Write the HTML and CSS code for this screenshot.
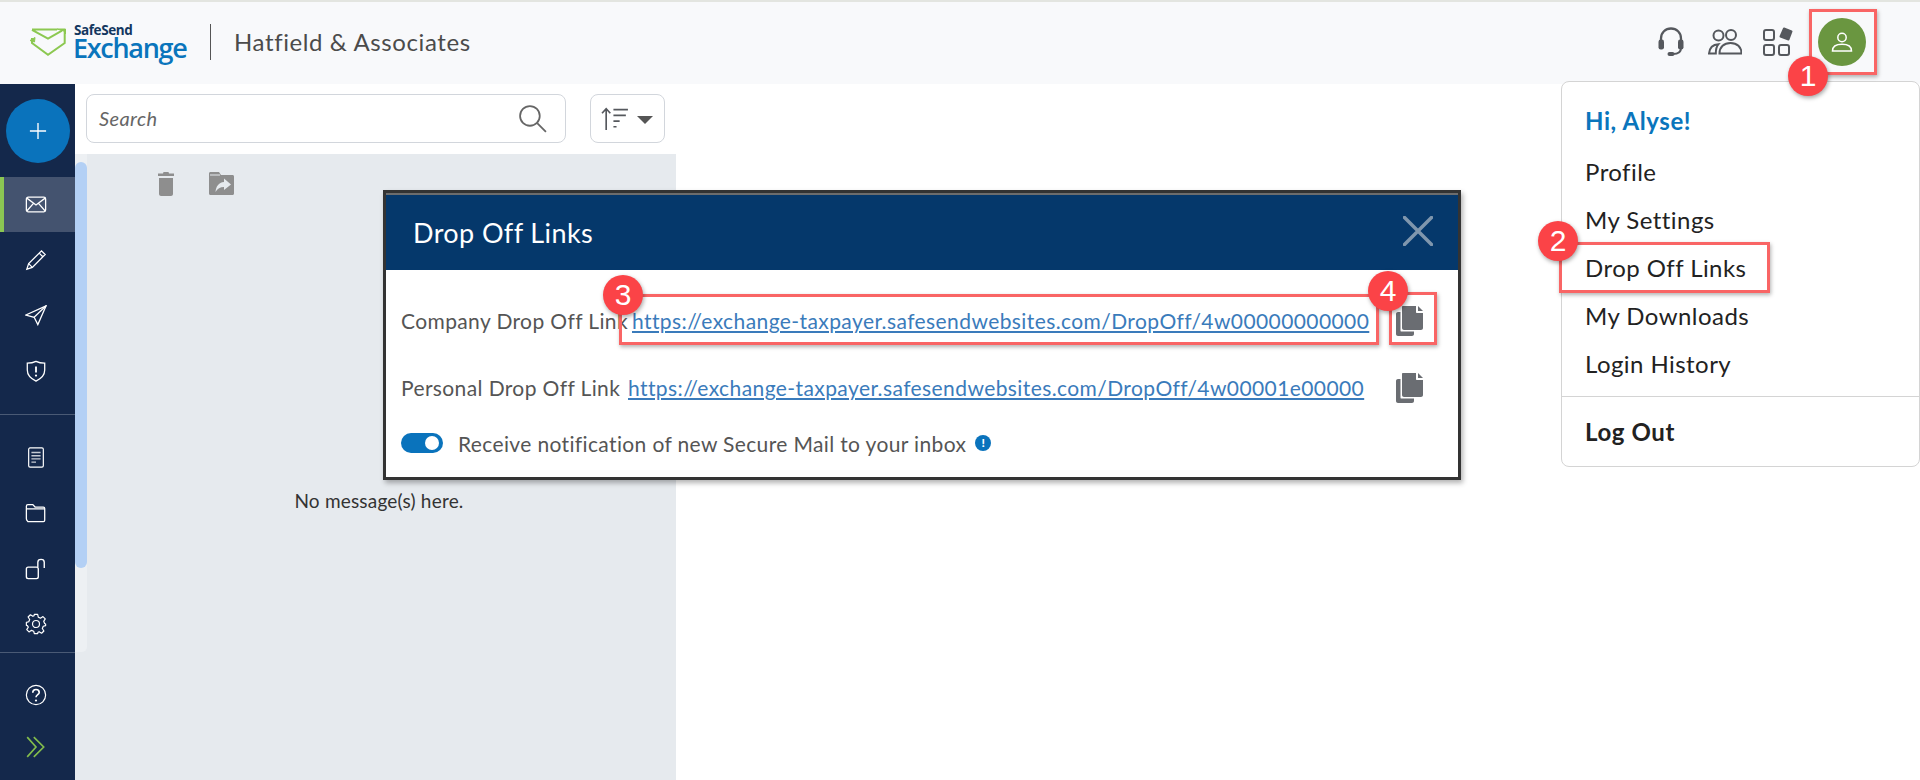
FILE: index.html
```html
<!DOCTYPE html>
<html lang="en">
<head>
<meta charset="utf-8">
<title>SafeSend Exchange</title>
<link rel="stylesheet" href="styles.css">
</head>
<body>
<header class="topbar">
  <div class="brand">
    <svg class="logo-mark" viewBox="0 0 36 28" fill="none" stroke="#8cc851" stroke-width="2">
      <path d="M2 1.500H27M2 1.800L18 10.700L32 2.700"/>
      <path d="M27 1H35.500V6L34 3Z" fill="#8cc851" stroke-width="1"/>
      <path d="M34.700 3.300V15L18 26.700L2 15V10"/>
      <path d="M0 12.500L5 9.500L4.500 14Z" fill="#8cc851" stroke-width="1"/>
    </svg>
    <div class="logo-text"><span class="logo-top">SafeSend</span><span class="logo-bottom">Exchange</span></div>
    <div class="brand-sep"></div>
    <div class="company">Hatfield &amp; Associates</div>
  </div>
  <div class="top-icons">
    <svg class="ti-head" viewBox="0 0 26 30" fill="none" stroke="#55585d" stroke-width="2.300">
      <path d="M3 15V11.500C3 5.500 7.500 1.500 13 1.500S23 5.500 23 11.500V15"/>
      <rect x="0.500" y="12.500" width="5.500" height="10" rx="2.200" fill="#55585d" stroke="none"/>
      <rect x="20" y="12.500" width="5.500" height="10" rx="2.200" fill="#55585d" stroke="none"/>
      <path d="M23 21C23 25 20 27 15 27" stroke-width="2"/>
      <rect x="9.500" y="25" width="7" height="4" rx="2" fill="#55585d" stroke="none"/>
    </svg>
    <svg class="ti-people" viewBox="0 0 34 26" fill="none" stroke="#55585d" stroke-width="2">
      <circle cx="10.500" cy="6.500" r="5"/>
      <circle cx="23" cy="6" r="5"/>
      <path d="M1 24.500C1.500 19 5 15.500 10.500 15.200C8.500 17.500 7.800 20.500 7.800 24.500Z"/>
      <path d="M11.500 24.500C11.500 18 16 14 22.500 14S33.500 18 33.500 24.500Z"/>
    </svg>
    <svg class="ti-apps" viewBox="0 0 30 30" fill="none" stroke="#55585d" stroke-width="2">
      <rect x="1" y="3" width="10" height="10" rx="2"/>
      <rect x="1" y="18" width="10" height="10" rx="2"/>
      <rect x="16" y="18" width="10" height="10" rx="2"/>
      <path d="M21 1.500L28.500 4.500L25.500 12.500L17.500 9.500Z" fill="#55585d" stroke-linejoin="round"/>
    </svg>
    <div class="avatar">
      <svg viewBox="0 0 24 24" fill="none" stroke="#fff" stroke-width="1.500">
        <circle cx="12" cy="7.500" r="4.200"/>
        <path d="M2.500 21C2.500 16.500 6 14.300 12 14.300S21.500 16.500 21.500 21Z"/>
      </svg>
    </div>
  </div>
</header>

<div class="workspace">
  <nav class="sidebar">
    <div class="new-wrap"><div class="new-btn"><svg viewBox="0 0 20 20" stroke="#fff" stroke-width="1.500"><path d="M10 1V19M1 10H19"/></svg></div></div>
    <div class="nav-item active">
      <svg viewBox="0 0 24 20" fill="none" stroke="#fff" stroke-width="1.400"><rect x="1.500" y="1.500" width="21" height="16" rx="2"/><path d="M2 2.500L12 10L22 2.500M2 16.500L9 8.500M22 16.500L15 8.500"/></svg>
    </div>
    <div class="nav-item">
      <svg viewBox="0 0 24 24" fill="none" stroke="#fff" stroke-width="1.400"><path d="M2 22L4 16L18 2L22 6L8 20Z"/><path d="M4 16L8 20M15.500 4.500L19.500 8.500"/></svg>
    </div>
    <div class="nav-item">
      <svg viewBox="0 0 24 24" fill="none" stroke="#fff" stroke-width="1.400"><path d="M23 2L1 12L10 14.500L14 22.500Z"/><path d="M23 2L10 14.500"/></svg>
    </div>
    <div class="nav-item">
      <svg viewBox="0 0 24 24" fill="none" stroke="#fff" stroke-width="1.400"><path d="M12 1.500C15 3 18 3.500 21.500 3.500V11C21.500 16.500 17.500 20.500 12 23C6.500 20.500 2.500 16.500 2.500 11V3.500C6 3.500 9 3 12 1.500Z"/><path d="M12 7V13.500" stroke-width="2"/><circle cx="12" cy="17" r="1.200" fill="#fff" stroke="none"/></svg>
    </div>
    <div class="nav-sep first"></div>
    <div class="nav-item">
      <svg viewBox="0 0 20 24" fill="none" stroke="#fff" stroke-width="1.300"><rect x="2" y="1" width="16" height="21" rx="1.500"/><path d="M5 6H15M5 9.500H15M5 13H15M5 16.500H10" stroke="#c5cad3" stroke-width="1.500"/></svg>
    </div>
    <div class="nav-item">
      <svg viewBox="0 0 24 22" fill="none" stroke="#fff" stroke-width="1.400"><path d="M2.500 19.500C1.800 19 1.500 18 1.500 17V3.500C1.500 2.500 2.200 1.800 3.200 1.800H8.500L11 4.500H20C21 4.500 21.500 5.200 21.500 6.200V19C21.500 19.800 20.800 20.500 20 20.500H4C3.400 20.500 2.900 20.100 2.500 19.500Z"/><path d="M1.500 6.500H21.500"/></svg>
    </div>
    <div class="nav-item">
      <svg viewBox="0 0 24 24" fill="none" stroke="#fff" stroke-width="1.500"><rect x="1.500" y="10" width="13" height="12.500" rx="2"/><path d="M14 10V4.500C14 2.500 15.500 1.500 17.500 1.500S21 2.500 21 4.500V11"/></svg>
    </div>
    <div class="nav-item">
      <svg viewBox="0 0 24 24" fill="none" stroke="#fff" stroke-width="1.300"><circle cx="12" cy="12" r="3.800"/><path d="M10.200 1.500H13.800L14.500 4.600L16.900 5.600L19.600 3.900L22.100 6.400L20.400 9.100L21.400 11.500L22.500 12V13.800L19.900 14.500L18.900 16.900L20.600 19.600L18.100 22.100L15.400 20.400L14.200 21L13.800 22.500H10.200L9.500 19.900L7.100 18.900L4.400 20.600L1.900 18.100L3.600 15.400L2.600 13.800L1.500 13.500V10.200L4.100 9.500L5.100 7.100L3.400 4.400L5.900 1.900L8.600 3.600L9.800 3Z" stroke-linejoin="round"/></svg>
    </div>
    <div class="nav-sep"></div>
    <div class="nav-item help">
      <svg viewBox="0 0 24 24" fill="none" stroke="#fff" stroke-width="1.300"><circle cx="12" cy="12" r="10.500"/><path d="M8.500 9.500C8.500 7.300 10 6 12 6S15.500 7.300 15.500 9.200C15.500 11.500 12 11.800 12 14.500" stroke-width="1.800"/><circle cx="12" cy="18" r="1.200" fill="#fff" stroke="none"/></svg>
    </div>
    <div class="nav-item chevrons">
      <svg viewBox="0 0 18 20" fill="none" stroke="#83bd4c" stroke-width="1.500"><path d="M1 1L9 10L1 19M7 1L16 10L7 19"/></svg>
    </div>
  </nav>

  <section class="panel">
    <div class="search-row">
      <div class="search-box">
        <span class="search-text">Search</span>
        <svg class="search-icon" viewBox="0 0 28 28" fill="none" stroke="#666" stroke-width="1.700"><circle cx="11.500" cy="11.500" r="9.500"/><path d="M18.500 18.500L27 27"/></svg>
      </div>
      <div class="sort-btn">
        <svg class="sort-icon" viewBox="0 0 28 22" fill="none" stroke="#55585d" stroke-width="1.600"><path d="M5 22V2M1 6L5 1.500L9 6"/><path d="M12 2.500H26M12 8H24M12 13.500H18M12 19H15"/></svg>
        <span class="caret"></span>
      </div>
    </div>
    <div class="list-area">
      <div class="scroll-track"><div class="scroll-thumb"></div></div>
      <div class="list-body">
        <div class="list-tools">
          <svg class="tool-trash" viewBox="0 0 16 24" fill="#8e8e8e"><path d="M5.500 0H10.500L11 1.500H16V4H0V1.500H5Z"/><path d="M1 6H15V22C15 23 14 24 13 24H3C2 24 1 23 1 22Z"/></svg>
          <svg class="tool-folder" viewBox="0 0 25 23" fill="#8e8e8e"><path d="M0 1.500C0 .6.6 0 1.500 0H10L12 3H23.500C24.400 3 25 3.600 25 4.500V21.500C25 22.400 24.400 23 23.500 23H1.500C.6 23 0 22.400 0 21.500Z"/><path d="M1 3H11" stroke="#e6eaee" stroke-width="1"/><path d="M15 6.500L22 12.500L15 18V15C11 15 8.500 16.500 6.500 20C7 14.500 9.500 10.500 15 10Z" fill="#e6eaee"/></svg>
        </div>
        <div class="no-msg">No message(s) here.</div>
      </div>
    </div>
  </section>
  <div class="blank"></div>
</div>

<div class="user-menu">
  <div class="menu-hi">Hi, Alyse!</div>
  <div class="menu-item">Profile</div>
  <div class="menu-item">My Settings</div>
  <div class="menu-item">Drop Off Links</div>
  <div class="menu-item">My Downloads</div>
  <div class="menu-item">Login History</div>
  <div class="menu-sep"></div>
  <div class="menu-item logout">Log Out</div>
</div>

<div class="modal">
  <div class="modal-head">
    <span class="modal-title">Drop Off Links</span>
    <svg class="modal-close" viewBox="0 0 30 30" stroke="#7f96ad" stroke-width="3.500" stroke-linecap="round"><path d="M1.500 1.500L28.500 28.500M28.500 1.500L1.500 28.500"/></svg>
  </div>
  <div class="modal-body">
    <div class="link-row row-company">
      <span class="link-label">Company Drop Off Link</span>
      <a class="link-url" href="#">https://exchange-taxpayer.safesendwebsites.com/DropOff/4w00000000000</a>
      <svg class="copy" viewBox="0 0 27 30" fill="#6a6d72"><path d="M7 0H20V6C20 6.600 20.400 7 21 7H27V22C27 23.100 26.100 24 25 24H8C6.900 24 6 23.100 6 22V1C6 .4 6.400 0 7 0Z"/><path d="M22 0L27 5H22Z"/><path d="M4.500 6V25C4.500 25.300 4.700 25.500 5 25.500H18V28C18 29.100 17.100 30 16 30H2C.9 30 0 29.100 0 28V8C0 6.900 .9 6 2 6Z"/></svg>
    </div>
    <div class="link-row row-personal">
      <span class="link-label">Personal Drop Off Link</span>
      <a class="link-url" href="#">https://exchange-taxpayer.safesendwebsites.com/DropOff/4w00001e00000</a>
      <svg class="copy" viewBox="0 0 27 30" fill="#6a6d72"><path d="M7 0H20V6C20 6.600 20.400 7 21 7H27V22C27 23.100 26.100 24 25 24H8C6.900 24 6 23.100 6 22V1C6 .4 6.400 0 7 0Z"/><path d="M22 0L27 5H22Z"/><path d="M4.500 6V25C4.500 25.300 4.700 25.500 5 25.500H18V28C18 29.100 17.100 30 16 30H2C.9 30 0 29.100 0 28V8C0 6.900 .9 6 2 6Z"/></svg>
    </div>
    <div class="notify-row">
      <span class="toggle"><span class="knob"></span></span>
      <span class="notify-text">Receive notification of new Secure Mail to your inbox</span>
      <span class="info">!</span>
    </div>
  </div>
</div>

<div class="mark box-1"></div>
<div class="mark box-2"></div>
<div class="mark box-3"></div>
<div class="mark box-4"></div>
<div class="badge badge-1">1</div>
<div class="badge badge-2">2</div>
<div class="badge badge-3">3</div>
<div class="badge badge-4">4</div>
</body>
</html>
```
FILE: styles.css
```css
* { box-sizing: border-box; }
html, body { margin: 0; height: 780px; overflow: hidden; }
body { position: relative; background: #fff; font-family: "Lato", "Open Sans", sans-serif; color: #333; }

.topbar { height: 84px; background: #f8f9fb; border-top: 2px solid #e3e5e0; display: flex; justify-content: space-between; align-items: center; }
.brand { display: flex; align-items: center; padding-left: 30px; }
.logo-mark { width: 36px; height: 28px; margin-top: -2px; }
.logo-text { display: flex; flex-direction: column; margin-left: 8px; width: 120px; margin-top: -2px; }
.logo-top { font-family: "Open Sans", sans-serif; font-weight: 700; font-size: 13.5px; line-height: 12px; color: #13375f; letter-spacing: -.4px; }
.logo-bottom { font-family: "Open Sans", sans-serif; font-weight: 600; font-size: 27px; line-height: 24px; color: #0a75bc; letter-spacing: -1.3px; margin-left: -1px; }
.brand-sep { width: 1px; height: 36px; background: #555; margin-left: 16px; margin-top: -2px; }
.company { margin-left: 23px; font-size: 24px; line-height: 30px; color: #4b4b4b; letter-spacing: .6px; margin-top: -3px; }

.top-icons { display: flex; align-items: center; padding-right: 54px; margin-top: -2px; }
.ti-head { width: 26px; height: 30px; }
.ti-people { width: 34px; height: 26px; margin-left: 24px; }
.ti-apps { width: 30px; height: 30px; margin-left: 21px; }
.avatar { width: 48px; height: 48px; border-radius: 50%; background: #6a9640; margin-left: 25px; display: flex; align-items: center; justify-content: center; }
.avatar svg { width: 24px; height: 24px; }

.workspace { display: flex; height: 696px; }
.sidebar { width: 75px; background: #14284b; flex: none; }
.new-wrap { height: 93px; display: flex; padding: 15px 0 0 6px; }
.new-btn { width: 64px; height: 64px; border-radius: 50%; background: #0a73bc; display: flex; align-items: center; justify-content: center; }
.new-btn svg { width: 18px; height: 18px; }
.nav-item { height: 55.33px; display: flex; align-items: center; justify-content: center; padding-right: 3px; }
.nav-item svg { width: 22px; height: 22px; }
.nav-item.active { background: #44536f; border-left: 4px solid #8bc653; padding-right: 7px; }
.nav-sep { height: 1px; background: #4a5a75; }
.nav-sep.first { margin-top: 16px; margin-bottom: 15px; }
.nav-item.help { margin-top: 15px; }
.nav-item.chevrons { height: 48px; }

.panel { width: 601px; flex: none; display: flex; flex-direction: column; }
.search-row { height: 70px; display: flex; padding: 10px 0 0 11px; }
.search-box { width: 480px; height: 49px; border: 1px solid #d2d6dc; border-radius: 8px; background: #fff; display: flex; align-items: center; justify-content: space-between; padding: 0 18px 0 12px; }
.search-text { font-style: italic; font-size: 20px; line-height: 24px; margin-top: -2px; color: #666; letter-spacing: .4px; }
.search-icon { width: 29px; height: 29px; }
.sort-btn { width: 75px; height: 49px; margin-left: 24px; border: 1px solid #d2d6dc; border-radius: 8px; display: flex; align-items: center; padding-left: 10px; }
.sort-icon { width: 29px; height: 23px; }
.caret { margin: 2px 0 0 7px; border-left: 8px solid transparent; border-right: 8px solid transparent; border-top: 8px solid #555; }

.list-area { flex: 1; background: #e6eaee; display: flex; }
.scroll-track { width: 12px; height: 498px; background: #edf0f3; border-radius: 0 0 5px 0; padding-top: 8px; flex: none; }
.scroll-thumb { height: 406px; background: #b3d0f5; border-radius: 6px; }
.list-body { flex: 1; display: flex; flex-direction: column; }
.list-tools { display: flex; align-items: flex-start; padding: 18px 0 0 71px; }
.tool-trash { width: 16px; height: 24px; }
.tool-folder { width: 25px; height: 23px; margin-left: 35px; }
.no-msg { margin: 293px 0 0 -5px; text-align: center; font-size: 19px; letter-spacing: .2px; color: #333; }
.blank { flex: 1; }

.user-menu { position: absolute; left: 1561px; top: 81px; width: 359px; height: 386px; background: #fff; border: 1px solid #d4d4d4; border-radius: 8px; padding: 15px 0 0; }
.menu-hi { height: 51px; line-height: 48px; padding-left: 23px; color: #0a75bc; font-weight: 700; font-size: 24px; letter-spacing: .6px; }
.menu-item { height: 48px; line-height: 48px; padding-left: 23px; font-size: 24px; color: #222; letter-spacing: .45px; }
.menu-sep { height: 1px; background: #d4d4d4; margin-top: 8px; margin-bottom: 11px; }
.menu-item.logout { font-weight: 700; letter-spacing: .6px; }

.modal { position: absolute; left: 383px; top: 190px; width: 1078px; height: 290px; background: #fff; border: 3px solid #333; box-shadow: 2px 3px 5px rgba(0,0,0,.3); }
.modal-head { height: 77px; background: #05386b; border-top: 2px solid #6d6d6d; display: flex; justify-content: space-between; align-items: center; padding: 0 25px 0 27px; }
.modal-title { font-size: 27px; letter-spacing: .4px; color: #fff; }
.modal-close { width: 30px; height: 30px; margin-top: -3px; }
.modal-body { padding: 0 0 0 15px; }
.link-row { display: flex; align-items: center; height: 67px; font-size: 21px; color: #555; }
.row-company { margin-top: 17px; }
.link-label { letter-spacing: .38px; width: 231px; flex: none; }
.row-personal .link-label { width: 227px; }
.link-url { color: #3a7bbb; text-decoration: underline; white-space: nowrap; letter-spacing: .41px; width: 764px; flex: none; }
.row-personal .link-url { width: 768px; }
.copy { width: 27px; height: 30px; flex: none; }
.notify-row { display: flex; align-items: center; height: 40px; margin-top: 2px; }
.toggle { width: 42px; height: 20px; border-radius: 10px; background: #0a73bc; display: flex; align-items: center; justify-content: flex-end; padding-right: 4px; }
.knob { width: 14px; height: 14px; background: #fff; border-radius: 50%; }
.notify-text { margin-left: 15px; font-size: 21px; color: #555; letter-spacing: .36px; }
.info { width: 16px; height: 16px; margin-left: 9px; border-radius: 50%; background: #0a73bc; color: #fff; font-size: 12px; font-weight: 900; line-height: 16px; text-align: center; }

.mark { position: absolute; border: 3px solid #f96565; box-shadow: 1px 2px 4px rgba(0,0,0,.3); }
.box-1 { left: 1809px; top: 9px; width: 68px; height: 66px; }
.box-2 { left: 1559px; top: 242px; width: 211px; height: 51px; }
.box-3 { left: 619px; top: 294px; width: 760px; height: 51px; }
.box-4 { left: 1389px; top: 292px; width: 48px; height: 53px; }
.badge { position: absolute; width: 40px; height: 40px; border-radius: 50%; background: #fb4347; color: #fff; font-family: "Liberation Sans", sans-serif; font-size: 30px; line-height: 40px; text-align: center; box-shadow: 1px 2px 4px rgba(0,0,0,.35); }
.badge-1 { left: 1788px; top: 56px; }
.badge-2 { left: 1538px; top: 221px; }
.badge-3 { left: 603px; top: 275px; }
.badge-4 { left: 1368px; top: 271px; }
```
